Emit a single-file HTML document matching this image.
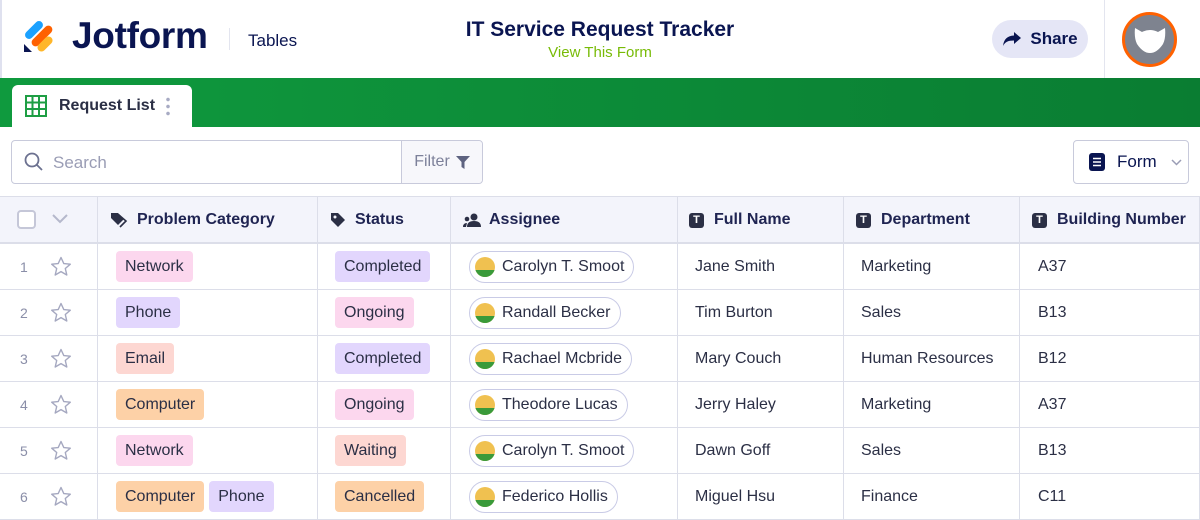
<!DOCTYPE html>
<html><head><meta charset="utf-8"><style>
*{box-sizing:border-box;margin:0;padding:0}
body{width:1200px;height:520px;overflow:hidden;font-family:"Liberation Sans",sans-serif;background:#fff;position:relative;color:#2b2f45}
.abs{position:absolute}
.hdr{left:0;top:0;width:1200px;height:78px;background:#fff;border-left:2px solid #dfe1ef}
.green{left:0;top:78px;width:1200px;height:49px;background:linear-gradient(90deg,#0f9a3e,#0a7d32)}
.tab{left:12px;top:85px;width:180px;height:42px;background:#fff;border-radius:6px 6px 0 0}
.cell{position:absolute;display:flex;align-items:center;font-size:16px;padding-top:1px}
.th{font-weight:bold;color:#1f2452;font-size:16px}
.tag{height:31px;line-height:31px;padding:0 9px;border-radius:4px;font-size:16px;color:#2b2f45;margin-right:5px;display:inline-block}
.pk{background:#fcd7ee}.pu{background:#e2d6fd}.sa{background:#fdd7d2}.or{background:#fdd1a7}
.pill{border:1px solid #c9cbe6;border-radius:16px;height:32px;padding:0 9px 0 5px;display:flex;align-items:center;font-size:16px}
.av{width:20px;height:20px;border-radius:50%;background:#f0c150;margin-right:7px;position:relative;overflow:hidden}
.av:after{content:"";position:absolute;left:0;bottom:0;width:20px;height:7px;background:#3a9a3a}
.hl{position:absolute;left:0;width:1200px;height:1px;background:#dcdee9}
.vl{position:absolute;top:197px;width:1px;height:323px;background:#dcdee9}
.T{display:inline-block;width:15px;height:15px;background:#2b2f45;border-radius:3px;color:#fff;font-size:11px;text-align:center;line-height:15px;margin-right:10px}
</style></head><body>
<div class="abs hdr"></div>
<svg class="abs" style="left:22px;top:18px" width="34" height="36" viewBox="0 0 34 36">
<rect x="1" y="8" width="22" height="8" rx="4" transform="rotate(-45 12 12)" fill="#1ba1ff"/>
<rect x="7" y="14" width="26" height="8" rx="4" transform="rotate(-45 20 18)" fill="#ff6100"/>
<rect x="14" y="22" width="18" height="8" rx="4" transform="rotate(-45 23 26)" fill="#ffb629"/>
<path d="M2 26 L2 34 L10 34 Z" fill="#0a1551"/></svg>
<div class="abs" style="left:72px;top:15px;font-size:37px;font-weight:bold;color:#0a1551;letter-spacing:-0.3px">Jotform</div>
<div class="abs" style="left:229px;top:28px;width:1px;height:22px;background:#e3e5ef"></div>
<div class="abs" style="left:248px;top:31px;font-size:17px;color:#0a1551">Tables</div>
<div class="abs" style="left:400px;top:18px;width:400px;text-align:center;font-size:21px;font-weight:bold;color:#0a1551">IT Service Request Tracker</div>
<div class="abs" style="left:400px;top:44px;width:400px;text-align:center;font-size:15px;color:#78bb07">View This Form</div>
<div class="abs" style="left:992px;top:20px;width:96px;height:38px;border-radius:19px;background:#e5e6f6;display:flex;align-items:center;justify-content:center;font-weight:bold;font-size:17px;color:#0a1551">
<svg width="20" height="14" viewBox="0 0 20 14" style="margin-right:8px"><path d="M12 0 L19 6 L12 12 L12 8.5 C6 8.5 3 10 1 14 C2 7 5 4 12 3.5 Z" fill="#0a1551"/></svg>Share</div>
<div class="abs" style="left:1104px;top:0;width:1px;height:78px;background:#e3e5ef"></div>
<div class="abs" style="left:1122px;top:12px;width:55px;height:55px;border-radius:50%;background:#7e838f;border:3px solid #ff6100"></div>
<svg class="abs" style="left:1133px;top:24px" width="34" height="30" viewBox="0 0 34 30"><path d="M2 4 L9 8 Q17 4 25 8 L32 4 Q33 14 30 20 Q24 29 17 29 Q10 29 4 20 Q1 14 2 4Z" fill="#fff"/></svg>
<div class="abs green"></div>
<div class="abs tab"></div>
<svg class="abs" style="left:25px;top:95px" width="22" height="22" viewBox="0 0 22 22"><rect x="1" y="1" width="20" height="20" fill="none" stroke="#1e9e44" stroke-width="2"/><path d="M1 7.5H21M1 14H21M7.5 1V21M14 1V21" stroke="#1e9e44" stroke-width="2"/></svg>
<div class="abs" style="left:59px;top:97px;font-size:16px;font-weight:bold;color:#2b2f45">Request List</div>
<div class="abs" style="left:166px;top:96px;width:4px;height:20px;background:radial-gradient(circle,#a8abc4 1.6px,transparent 2px) 0 0/4px 7px"></div>
<div class="abs" style="left:11px;top:140px;width:472px;height:44px;border:1px solid #c8cadb;border-radius:4px"></div>
<div class="abs" style="left:401px;top:141px;width:81px;height:42px;background:#f7f7fb;border-left:1px solid #c8cadb;border-radius:0 4px 4px 0;display:flex;align-items:center;justify-content:center;color:#7d819a;font-size:16px">Filter<svg width="14" height="13" viewBox="0 0 14 13" style="margin-left:6px"><path d="M0 0H14L8.5 6V13L5.5 11V6Z" fill="#5e6380"/></svg></div>
<svg class="abs" style="left:24px;top:152px" width="20" height="20" viewBox="0 0 20 20"><circle cx="8" cy="8" r="6.5" fill="none" stroke="#6c7190" stroke-width="1.8"/><path d="M13 13L18 18" stroke="#6c7190" stroke-width="1.8"/></svg>
<div class="abs" style="left:53px;top:153px;font-size:17px;color:#9a9db5">Search</div>
<div class="abs" style="left:1073px;top:140px;width:116px;height:44px;border:1px solid #c8cadb;border-radius:4px;display:flex;align-items:center;padding-left:15px;font-size:17px;color:#0a1551">
<svg width="16" height="18" viewBox="0 0 16 18" style="margin-right:12px"><rect width="16" height="18" rx="3" fill="#0a1551"/><path d="M4 5.5H12M4 9H12M4 12.5H12" stroke="#fff" stroke-width="1.6"/></svg>Form<svg width="11" height="7" viewBox="0 0 11 7" style="margin-left:14px"><path d="M1 1L5.5 5.5L10 1" fill="none" stroke="#9a9db5" stroke-width="1.5"/></svg></div>
<div class="abs" style="left:0;top:197px;width:1200px;height:45px;background:#f3f4fb"></div>
<div class="hl" style="top:196px"></div>
<div class="hl" style="top:242px;height:2px"></div>
<div class="hl" style="top:289px"></div><div class="hl" style="top:335px"></div><div class="hl" style="top:381px"></div><div class="hl" style="top:427px"></div><div class="hl" style="top:473px"></div><div class="hl" style="top:519px"></div>
<div class="vl" style="left:97px"></div><div class="vl" style="left:317px"></div><div class="vl" style="left:450px"></div><div class="vl" style="left:677px"></div><div class="vl" style="left:843px"></div><div class="vl" style="left:1019px"></div><div class="vl" style="left:1199px"></div>
<div class="abs" style="left:17px;top:210px;width:19px;height:19px;border:2px solid #c5c7d8;border-radius:4px;background:#fff"></div>
<svg class="abs" style="left:52px;top:214px" width="16" height="10" viewBox="0 0 16 10"><path d="M1 1L8 8L15 1" fill="none" stroke="#b5b8cc" stroke-width="2"/></svg>
<div class="cell th" style="left:110px;top:197px;height:45px"><svg width="18" height="16" viewBox="0 0 18 16" style="margin-right:9px"><path d="M1 1H8L14 7L8 13L1 6Z" fill="#2b2f45"/><path d="M5 3H9L16 9L10 15" fill="none" stroke="#2b2f45" stroke-width="1.6"/></svg>Problem Category</div>
<div class="cell th" style="left:330px;top:197px;height:45px"><svg width="16" height="16" viewBox="0 0 16 16" style="margin-right:9px"><path d="M1 1H8L15 8L8 15L1 8Z" fill="#2b2f45"/><circle cx="5" cy="5" r="1.5" fill="#f3f4fb"/></svg>Status</div>
<div class="cell th" style="left:463px;top:197px;height:45px"><svg width="18" height="14" viewBox="0 0 18 14" style="margin-right:8px"><circle cx="11" cy="4" r="3.5" fill="#2b2f45"/><path d="M4 14Q4 8 11 8Q18 8 18 14Z" fill="#2b2f45"/><circle cx="4" cy="6" r="2.3" fill="#2b2f45"/><path d="M0 14Q0 10 4 10L3 14Z" fill="#2b2f45"/></svg>Assignee</div>
<div class="cell th" style="left:689px;top:197px;height:45px"><span class="T">T</span>Full Name</div>
<div class="cell th" style="left:856px;top:197px;height:45px"><span class="T">T</span>Department</div>
<div class="cell th" style="left:1032px;top:197px;height:45px"><span class="T">T</span>Building Number</div>

<div id="rows"></div>
<script>
var d=[["1",[["Network","pk"]],["Completed","pu"],"Carolyn T. Smoot","Jane Smith","Marketing","A37"],
["2",[["Phone","pu"]],["Ongoing","pk"],"Randall Becker","Tim Burton","Sales","B13"],
["3",[["Email","sa"]],["Completed","pu"],"Rachael Mcbride","Mary Couch","Human Resources","B12"],
["4",[["Computer","or"]],["Ongoing","pk"],"Theodore Lucas","Jerry Haley","Marketing","A37"],
["5",[["Network","pk"]],["Waiting","sa"],"Carolyn T. Smoot","Dawn Goff","Sales","B13"],
["6",[["Computer","or"],["Phone","pu"]],["Cancelled","or"],"Federico Hollis","Miguel Hsu","Finance","C11"]];
var h="";d.forEach(function(r,i){var t=243+i*46;
function c(l,x){return '<div class="cell" style="left:'+l+'px;top:'+t+'px;height:46px">'+x+'</div>'}
h+=c(20,'<span style="color:#8a8ea8;font-size:14px">'+r[0]+'</span>');
h+=c(50,'<svg width="22" height="21" viewBox="0 0 22 21"><path d="M11 1.5L13.8 7.6L20.3 8.2L15.3 12.5L16.8 19L11 15.6L5.2 19L6.7 12.5L1.7 8.2L8.2 7.6Z" fill="none" stroke="#a5a8c0" stroke-width="1.4" stroke-linejoin="round"/></svg>');
h+=c(116,r[1].map(function(g){return '<span class="tag '+g[1]+'">'+g[0]+'</span>'}).join(''));
h+=c(335,'<span class="tag '+r[2][1]+'">'+r[2][0]+'</span>');
h+=c(469,'<span class="pill"><span class="av"></span>'+r[3]+'</span>');
h+=c(695,r[4]);h+=c(861,r[5]);h+=c(1038,r[6]);});
document.getElementById("rows").innerHTML=h;
</script>
</body></html>
